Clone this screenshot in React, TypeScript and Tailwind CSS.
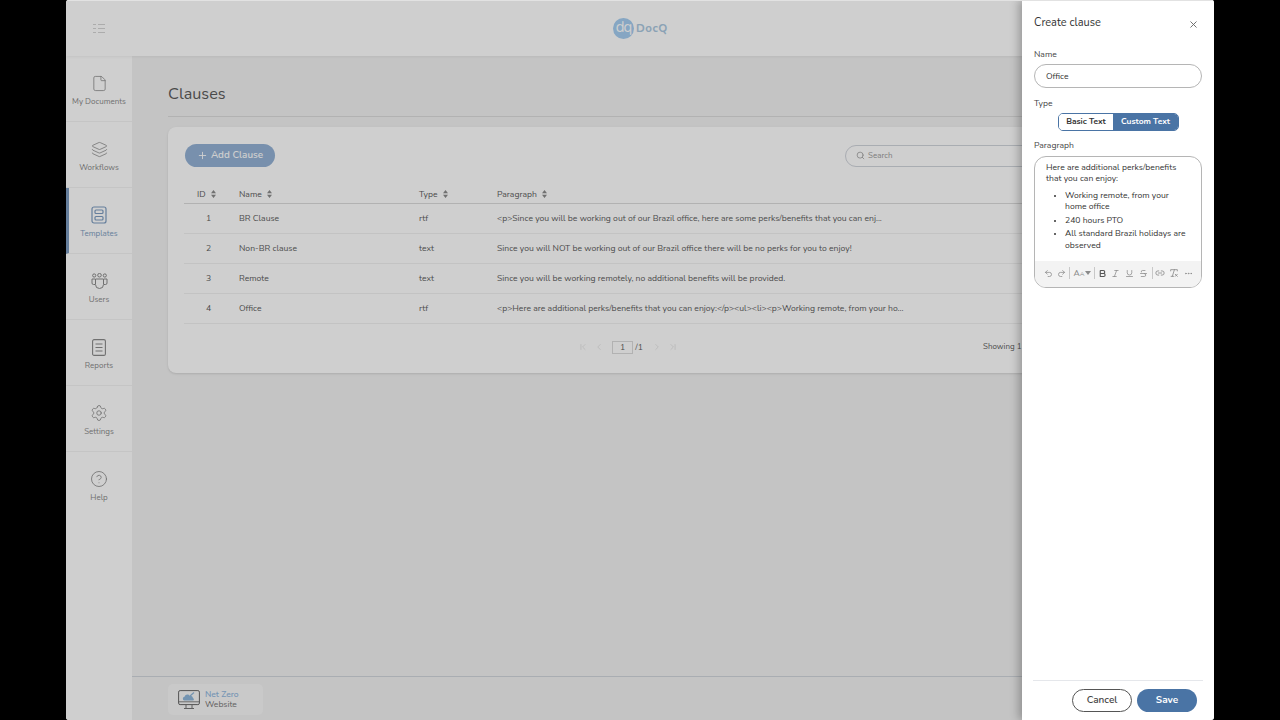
import { useState } from 'react';
import {
  Bold,
  ChevronFirst,
  ChevronLast,
  ChevronLeft,
  ChevronRight,
  Ellipsis,
  File,
  CircleHelp,
  Italic,
  Layers,
  Link2,
  Plus,
  Redo2,
  RemoveFormatting,
  Search,
  Settings,
  Strikethrough,
  Underline,
  Undo2,
  X,
} from 'lucide-react';

const font = 'font-["Nunito","Lato",sans-serif]';

function TemplatesIcon() {
  return (
    <svg width="16" height="18" viewBox="0 0 16 18" fill="none" stroke="currentColor" strokeWidth="1.2">
      <rect x="1" y="1" width="14" height="16" rx="2" />
      <rect x="4" y="4" width="8" height="3.5" rx="1" />
      <rect x="4" y="10.5" width="8" height="3.5" rx="1" />
    </svg>
  );
}

function UsersIcon() {
  return (
    <svg width="17" height="16" viewBox="0 0 17 16" fill="none" stroke="currentColor" strokeWidth="1">
      <circle cx="3.2" cy="2.5" r="1.6" />
      <circle cx="8.5" cy="2.2" r="1.8" />
      <circle cx="13.8" cy="2.5" r="1.6" />
      <path d="M4.5 6h8v5.5a4 4 0 0 1-8 0z" />
      <path d="M4 11.5H2.5A1.5 1.5 0 0 1 1 10V6h3" />
      <path d="M13 11.5h1.5A1.5 1.5 0 0 0 16 10V6h-3" />
    </svg>
  );
}

function ReportsIcon() {
  return (
    <svg width="14" height="17" viewBox="0 0 14 17" fill="none" stroke="currentColor" strokeWidth="1.1">
      <rect x=".6" y=".6" width="12.8" height="15.8" rx="1.5" />
      <path d="M3.5 5h7M3.5 8.5h7M3.5 12h7" />
    </svg>
  );
}

function MenuIcon() {
  return (
    <svg width="12" height="9" viewBox="0 0 12 9" fill="none" stroke="#d4d4d4" strokeWidth="1">
      <path d="M0 .5h3M5 .5h7M0 4.5h3M5 4.5h7M0 8.5h3M5 8.5h7" />
    </svg>
  );
}

function SortIcon() {
  return (
    <svg width="5" height="8" viewBox="0 0 5 8" fill="#8c8c8c" className="ml-[5px]">
      <path d="M2.5 0 5 3.2H0zM2.5 8 0 4.8h5z" />
    </svg>
  );
}

function MonitorCloud() {
  return (
    <svg width="22" height="20" viewBox="0 0 22 20" fill="none">
      <rect x=".6" y=".6" width="20.8" height="14" rx="1.5" stroke="#666" strokeWidth="1" />
      <path d="M.8 11.8h20.4" stroke="#666" strokeWidth=".8" />
      <path d="M8 15v3M14 15v3M6 18.5h10" stroke="#666" strokeWidth=".9" />
      <path d="M6 10.5a2 2 0 0 1 .5-3.8 3 3 0 0 1 5.4-.8 2.4 2.4 0 0 1 3 2.2 1.3 1.3 0 0 1 .3 2.4z" fill="#8fb7da" />
      <path d="M12 6l4-3.5" stroke="#8fb7da" strokeWidth="1.2" />
    </svg>
  );
}

const navItems = [
  { label: 'My Documents', icon: <File size={17} strokeWidth={1.1} /> },
  { label: 'Workflows', icon: <Layers size={17} strokeWidth={1.1} /> },
  { label: 'Templates', icon: <TemplatesIcon />, active: true },
  { label: 'Users', icon: <UsersIcon /> },
  { label: 'Reports', icon: <ReportsIcon /> },
  { label: 'Settings', icon: <Settings size={18} strokeWidth={1.1} /> },
  { label: 'Help', icon: <CircleHelp size={18} strokeWidth={1.1} /> },
];

const rows = [
  { id: 1, name: 'BR Clause', type: 'rtf', text: '<p>Since you will be working out of our Brazil office, here are some perks/benefits that you can enj...' },
  { id: 2, name: 'Non-BR clause', type: 'text', text: 'Since you will NOT be working out of our Brazil office there will be no perks for you to enjoy!' },
  { id: 3, name: 'Remote', type: 'text', text: 'Since you will be working remotely, no additional benefits will be provided.' },
  { id: 4, name: 'Office', type: 'rtf', text: '<p>Here are additional perks/benefits that you can enjoy:</p><ul><li><p>Working remote, from your ho...' },
];

function Sidebar() {
  return (
    <aside className="w-[66px] shrink-0 bg-white">
      {navItems.map((item) => (
        <div
          key={item.label}
          className={`h-[66px] flex flex-col items-center pt-[17px] border-b border-[#f3f3f3] last:border-b-0 ${
            item.active ? 'border-l-[3px] border-l-[#7d9cc0] pr-[3px] text-[#7d9cc0]' : 'text-[#8a8a8a]'
          }`}
        >
          <div className="h-[20px] flex items-center justify-center">{item.icon}</div>
          <span className="mt-[3px] text-[8px] leading-[12px] whitespace-nowrap">{item.label}</span>
        </div>
      ))}
    </aside>
  );
}

function ClauseTable() {
  return (
    <div className="mt-[18px] text-[8.6px] text-[#5c5c5c]">
      <div className="grid grid-cols-[55px_180px_78px_1fr] h-[19px] items-center border-b border-[#dcdcdc]">
        <div className="flex items-center pl-[13px]">ID<SortIcon /></div>
        <div className="flex items-center">Name<SortIcon /></div>
        <div className="flex items-center">Type<SortIcon /></div>
        <div className="flex items-center">Paragraph<SortIcon /></div>
      </div>
      {rows.map((row) => (
        <div key={row.id} className="grid grid-cols-[55px_180px_78px_1fr] h-[30px] items-center border-b border-[#f0f0f0]">
          <div className="pl-[22px]">{row.id}</div>
          <div>{row.name}</div>
          <div>{row.type}</div>
          <div className="whitespace-nowrap">{row.text}</div>
        </div>
      ))}
    </div>
  );
}

function Pagination() {
  return (
    <div className="relative mt-[12px] h-[22px] flex items-center justify-center pr-[90px] text-[#8a8a8a]">
      <ChevronFirst size={10} className="text-[#e4e4e4]" />
      <ChevronLeft size={10} className="ml-[6px] text-[#e4e4e4]" />
      <span className="ml-[8px] w-[21px] h-[13px] border border-[#dcdcdc] text-[8.6px] leading-[11px] text-center text-[#5c5c5c]">1</span>
      <span className="ml-[2px] text-[8.6px] text-[#5c5c5c]">/1</span>
      <ChevronRight size={10} className="ml-[9px] text-[#e4e4e4]" />
      <ChevronLast size={10} className="ml-[6px] text-[#e4e4e4]" />
      <span className="absolute left-[799px] text-[8px] text-[#5c5c5c] whitespace-nowrap">Showing 1 to 4 of 4 entries</span>
    </div>
  );
}

function Editor() {
  return (
    <div className="mt-[4px] h-[132px] border border-[#b5b5b5] rounded-[12px] overflow-hidden flex flex-col">
      <div className="flex-1 px-[11px] pt-[5px] text-[8.6px] leading-[11.3px] text-[#333]">
        <p>Here are additional perks/benefits<br />that you can enjoy:</p>
        <ul className="list-disc marker:text-[6px] pl-[19px] mt-[5px] space-y-[2.5px]">
          <li>Working remote, from your<br />home office</li>
          <li>240 hours PTO</li>
          <li>All standard Brazil holidays are<br />observed</li>
        </ul>
      </div>
      <div className="h-[26px] shrink-0 bg-[#f3f3f3] flex items-center pl-[9px] pb-[2px] text-[#8a8a8a]">
        <Undo2 size={9} />
        <Redo2 size={9} className="ml-[4px]" />
        <span className="ml-[3px] w-px h-[12px] bg-[#c8c8c8]" />
        <span className="ml-[3.5px] w-[10px] text-[8.5px] leading-none whitespace-nowrap">A<span className="text-[6.5px]">A</span></span>
        <svg width="6" height="4" viewBox="0 0 6 4" fill="#8a8a8a" className="ml-[1px]"><path d="M0 0h6L3 4z" /></svg>
        <span className="ml-[3px] w-px h-[12px] bg-[#c8c8c8]" />
        <Bold size={9} strokeWidth={3} className="ml-[3px] text-[#555]" />
        <Italic size={9} className="ml-[4.5px]" />
        <Underline size={9} className="ml-[5px]" />
        <Strikethrough size={9} className="ml-[5px]" />
        <span className="ml-[3.5px] w-px h-[12px] bg-[#c8c8c8]" />
        <Link2 size={10} className="ml-[2px]" />
        <RemoveFormatting size={10} className="ml-[4px]" />
        <Ellipsis size={9} className="ml-[5px]" />
      </div>
    </div>
  );
}

function Drawer() {
  const [type, setType] = useState('custom');

  return (
    <div className={`absolute top-0 right-0 bottom-0 w-[192px] bg-white flex flex-col shadow-[-3px_0_9px_rgba(0,0,0,0.28)] ${font}`}>
      <div className="flex-1 px-[12px] text-[#444]">
        <div className="flex items-center justify-between h-[46px] pt-[1px]">
          <h2 className="text-[11px] text-[#333]">Create clause</h2>
          <X size={11} className="mr-[3px] mt-[1px] text-[#666]" />
        </div>
        <label className="block text-[8.6px] leading-[13px] mt-[2px]">Name</label>
        <input
          readOnly
          value="Office"
          className="block mt-[3px] w-full h-[24px] rounded-full border border-[#b5b5b5] px-[11px] text-[8.6px] text-[#333] outline-none"
        />
        <label className="block text-[8.6px] leading-[13px] mt-[9px]">Type</label>
        <div className="mt-[3px] ml-[24px] w-[121px] h-[18px] flex rounded-[5px] border border-[#4a74a5] overflow-hidden text-[8.4px] font-bold">
          <button onClick={() => setType('basic')} className="w-[54px] pt-[1px] bg-white text-[#333]">Basic Text</button>
          <button onClick={() => setType('custom')} className="flex-1 pt-[1px] bg-[#4a74a5] text-white">Custom Text</button>
        </div>
        <label className="block text-[8.6px] leading-[13px] mt-[8px]">Paragraph</label>
        <Editor />
      </div>
      <div className="mx-[11px] h-[40px] border-t border-gray-200 flex items-center justify-end gap-[5px] pr-[6px] text-[10px] font-semibold">
        <button className="w-[60px] h-[23px] rounded-full border border-[#555] text-[#444]">Cancel</button>
        <button className="w-[60px] h-[23px] rounded-full bg-[#4a74a5] text-white font-bold">Save</button>
      </div>
    </div>
  );
}

export default function App() {
  return (
    <div className={`h-[720px] bg-black flex justify-center ${font}`}>
      <div className="relative w-[1148px] h-[720px] rounded-[3px] overflow-hidden flex flex-col bg-[#f2f2f2]">
        <header className="h-[56px] shrink-0 bg-white flex items-center relative shadow-[0_1px_3px_rgba(0,0,0,0.06)]">
          <div className="w-[66px] flex justify-center"><MenuIcon /></div>
          <div className="absolute left-[547px] mt-[1px] flex items-center">
            <span className="w-[21px] h-[21px] rounded-full bg-[#a5cdf0] text-white text-[15px] leading-[19px] text-center tracking-[-1px]">dq</span>
            <span className="ml-[2px] text-[11.5px] font-bold tracking-[0.5px] text-[#abc8e0]">DocQ</span>
          </div>
        </header>

        <div className="flex-1 flex min-h-0">
          <Sidebar />
          <main className="flex-1 flex flex-col min-w-0">
            <div className="flex-1 px-[36px]">
              <h1 className="h-[61px] pt-[27px] border-b border-[#dcdcdc] text-[16.2px] leading-[22px] text-[#5c5c5c]">Clauses</h1>
              <section className="mt-[10px] h-[246px] bg-white rounded-[8px] px-[16px] pt-[17px] shadow-sm">
                <div className="flex items-center justify-between">
                  <button className="ml-[1px] w-[90px] h-[23px] rounded-full bg-[#94b2d5] text-white text-[9.9px] font-semibold flex items-center justify-center gap-[3px]">
                    <Plus size={11} />
                    Add Clause
                  </button>
                  <div className="w-[317px] h-[22px] rounded-full border border-gray-300 flex items-center pl-[10px] text-[8px] text-[#999]">
                    <Search size={9} className="mr-[3px]" />
                    Search
                  </div>
                </div>
                <ClauseTable />
                <Pagination />
              </section>
            </div>
            <footer className="h-[44px] shrink-0 border-t border-gray-300 px-[36px] pt-[7px]">
              <div className="w-[95px] h-[31px] rounded-[5px] bg-[#f8f8f8] flex items-center pl-[10px]">
                <MonitorCloud />
                <div className="ml-[5px] text-[8.5px] leading-[9.5px]">
                  <div className="font-semibold text-[#94b8df]">Net Zero</div>
                  <div className="text-[#777]">Website</div>
                </div>
              </div>
            </footer>
          </main>
        </div>

        <div className="absolute inset-0 bg-black/[0.19]" />
        <Drawer />
        <div className="absolute top-0 inset-x-0 h-px bg-[#e2e2e2]" />
      </div>
    </div>
  );
}
